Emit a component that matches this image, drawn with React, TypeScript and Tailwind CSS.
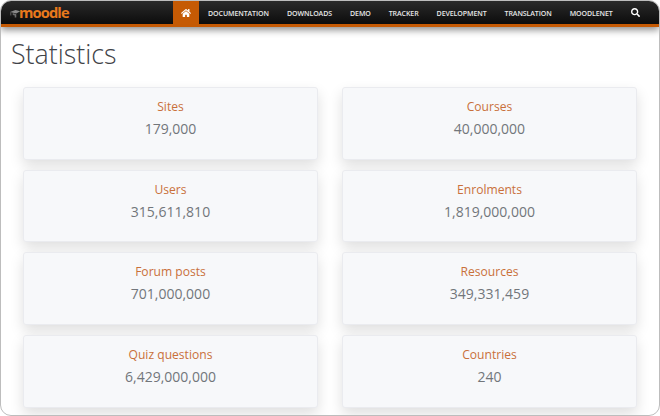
import { FaHome, FaSearch } from "react-icons/fa";

const navItems = ["DOCUMENTATION", "DOWNLOADS", "DEMO", "TRACKER", "DEVELOPMENT", "TRANSLATION", "MOODLENET"];

const stats = [
  { label: "Sites", value: "179,000" },
  { label: "Courses", value: "40,000,000" },
  { label: "Users", value: "315,611,810" },
  { label: "Enrolments", value: "1,819,000,000" },
  { label: "Forum posts", value: "701,000,000" },
  { label: "Resources", value: "349,331,459" },
  { label: "Quiz questions", value: "6,429,000,000" },
  { label: "Countries", value: "240" },
];

function Logo() {
  return (
    <div className="flex h-full items-center pl-[9px]">
      <svg width="11" height="9" viewBox="0 0 14 11" className="mt-[1px] mr-[-2px] shrink-0">
        <path d="M0 3.5 L7 1 L13 2.5 L8 5.5 L4 4.5 Z" fill="#8a8a8a" />
        <path d="M3.5 5 L8 6.5 L8 10.5 L6 10.5 L6 8 L3.5 7.5 Z" fill="#6e6e6e" />
        <path d="M1 4 L1 8" stroke="#8a8a8a" strokeWidth="0.8" />
      </svg>
      <span className="font-['Open_Sans',sans-serif] text-[14.7px] font-bold leading-none tracking-[-0.9px] text-[#e9791c]">
        moodle
      </span>
    </div>
  );
}

function StatCard({ label, value }: { label: string; value: string }) {
  return (
    <div className="flex h-[72.67px] flex-col items-center rounded-[3px] border border-[#eaebef] bg-[#f7f8fa] pt-[9px] shadow-[0_6px_14px_rgba(0,0,0,0.13)]">
      <p className="text-[12.1px] leading-[20px] text-[#c9703a]">{label}</p>
      <p className="mt-[1px] text-[14px] leading-[22px] text-[#72767b]">{value}</p>
    </div>
  );
}

export default function App() {
  return (
    <div className="h-[416px] w-[660px] overflow-hidden rounded-[11px] border border-[#bdbdbd] bg-white font-['Open_Sans',sans-serif]">
      <nav className="relative flex h-[26px] items-stretch border-b-[3px] border-[#c55a04] bg-[linear-gradient(to_bottom,#2a2a2a,#0c0c0c)] shadow-[0_3px_7px_rgba(0,0,0,0.45)]">
        <div className="w-[172px]">
          <Logo />
        </div>
        <div className="mb-[-3px] flex w-[26px] items-center justify-center bg-[#c55a04]">
          <FaHome size={10} className="mb-[3px] text-white" />
        </div>
        <ul className="flex items-center gap-[18px] pl-[9px] pt-[1px] text-[7.05px] font-semibold tracking-[-0.1px] text-[#e8e8e8]">
          {navItems.map((item) => (
            <li key={item}>{item}</li>
          ))}
        </ul>
        <div className="flex items-center pl-[18px]">
          <FaSearch size={9} className="text-white" />
        </div>
      </nav>

      <main className="px-[10px]">
        <h1 className="mt-[10px] text-[26.8px] leading-[34px] font-light text-[#3f4348]">Statistics</h1>
        <div className="mt-[16px] grid grid-cols-[295px_295px] gap-x-[24px] gap-y-[10px] pl-[12px]">
          {stats.map((s) => (
            <StatCard key={s.label} label={s.label} value={s.value} />
          ))}
        </div>
      </main>
    </div>
  );
}
